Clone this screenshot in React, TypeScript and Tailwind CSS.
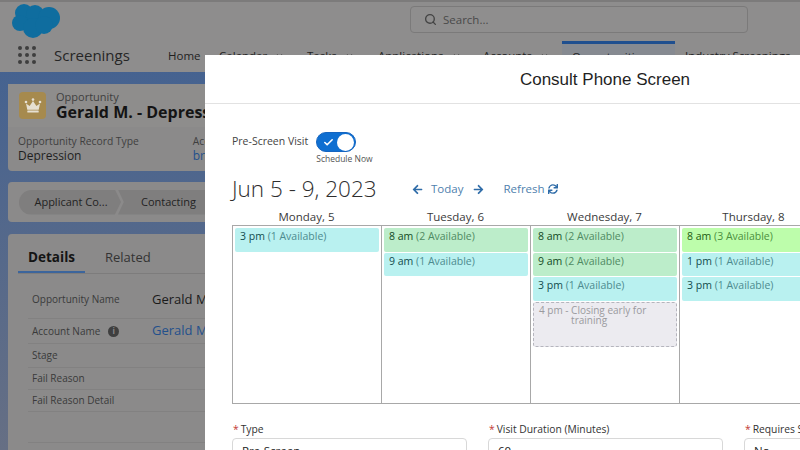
import { Check, ChevronDown, Search } from 'lucide-react';
import { FaArrowLeft, FaArrowRight, FaSync } from 'react-icons/fa';

const navItems = [
  { label: 'Home', width: 'w-[51px]', menu: false, active: false },
  { label: 'Calendar', width: 'w-[88px]', menu: true, active: false },
  { label: 'Tasks', width: 'w-[71px]', menu: true, active: false },
  { label: 'Applications', width: 'w-[105px]', menu: true, active: false },
  { label: 'Accounts', width: 'w-[79px]', menu: true, active: false },
  { label: 'Opportunities', width: 'w-[113px]', menu: true, active: true },
  { label: 'Industry Screenings', width: 'w-[130px] pl-[10px]', menu: false, active: false },
];

const detailRows = [
  { label: 'Opportunity Name', value: 'Gerald M. - Depression', link: false, info: false, height: 'h-[35px] pb-[3px]' },
  { label: 'Account Name', value: 'Gerald M.', link: true, info: true, height: 'h-[25px]' },
  { label: 'Stage', value: '', link: false, info: false, height: 'h-[24px]' },
  { label: 'Fail Reason', value: '', link: false, info: false, height: 'h-[22px]' },
  { label: 'Fail Reason Detail', value: '', link: false, info: false, height: 'h-[22px]' },
  { label: '', value: '', link: false, info: false, height: 'h-[31px]' },
];

type Slot = { time: string; count: number };

const days: { title: string; slots: Slot[]; closed?: boolean }[] = [
  { title: 'Monday, 5', slots: [{ time: '3 pm', count: 1 }] },
  { title: 'Tuesday, 6', slots: [{ time: '8 am', count: 2 }, { time: '9 am', count: 1 }] },
  { title: 'Wednesday, 7', slots: [{ time: '8 am', count: 2 }, { time: '9 am', count: 2 }, { time: '3 pm', count: 1 }], closed: true },
  { title: 'Thursday, 8', slots: [{ time: '8 am', count: 3 }, { time: '1 pm', count: 1 }, { time: '3 pm', count: 1 }] },
];

const slotStyles: Record<number, { box: string; time: string; note: string }> = {
  1: { box: 'bg-[#b9f1f0]', time: 'text-[#124c4e]', note: 'text-[#4d8b8f]' },
  2: { box: 'bg-[#bcedca]', time: 'text-[#124a24]', note: 'text-[#4f8a62]' },
  3: { box: 'bg-[#bdfdab]', time: 'text-[#1d5c12]', note: 'text-[#4b8f3e]' },
};

const fields = [
  { label: 'Type', value: 'Pre-Screen', width: 'w-[235px]' },
  { label: 'Visit Duration (Minutes)', value: '60', width: 'w-[235px]' },
  { label: 'Requires Supervisor', value: 'No', width: 'w-[235px]' },
];

function SalesforceLogo() {
  return (
    <svg viewBox="0 0 50 36" className="h-[36px] w-[50px]" fill="#0f6d9f">
      <circle cx="13" cy="10" r="9" />
      <circle cx="24" cy="11" r="9" />
      <circle cx="38" cy="15" r="11" />
      <circle cx="9" cy="20" r="8" />
      <circle cx="22" cy="25" r="10" />
      <circle cx="33" cy="22" r="9" />
    </svg>
  );
}

function CrownIcon() {
  return (
    <svg viewBox="0 0 20 20" className="h-[20px] w-[20px]" fill="#e6e0d2">
      <path d="M3 7.5l3.6 2.6L10 5l3.4 5.1L17 7.5l-1.3 6.2H4.3z" />
      <circle cx="3" cy="6" r="1.3" />
      <circle cx="10" cy="3.6" r="1.3" />
      <circle cx="17" cy="6" r="1.3" />
      <rect x="4.3" y="14.6" width="11.4" height="2" rx="0.5" />
    </svg>
  );
}

function Background() {
  return (
    <div className="flex h-[450px] w-[800px] flex-col bg-gradient-to-b from-[#3f6092] to-[#666f84]">
      <header className="h-[72px] shrink-0 border-t-2 border-[#7c7b7b] bg-[#8e8d8d]">
        <div className="flex h-[36px] items-start pl-[11px] pr-[52px] pt-[1px]">
          <SalesforceLogo />
          <div className="ml-auto mt-[3px] flex h-[27px] w-[338px] items-center gap-[6px] rounded border border-[#7b7a7a] bg-[#8f8e8e] pl-[13px] text-[11.5px] text-[#4a4a4a]">
            <Search size={13} strokeWidth={2.5} className="text-[#444]" />
            Search...
          </div>
        </div>
        <nav className="flex h-[34px] items-center pl-[18px]">
          <div className="grid h-[18px] w-[18px] shrink-0 grid-cols-3 gap-[3px]">
            {Array.from({ length: 9 }).map((_, i) => (
              <span key={i} className="rounded-full bg-[#3e3e3e]" />
            ))}
          </div>
          <span className="ml-[18px] w-[114px] shrink-0 text-[15px] text-[#262626]">Screenings</span>
          <div className="flex shrink-0 self-end">
            {navItems.map((item) => (
              <div
                key={item.label}
                className={`flex h-[31px] shrink-0 items-center pb-[2px] ${item.width} ${
                  item.active ? 'border-t-[3px] border-[#1f4f8f] bg-[#868a91] pl-[10px]' : ''
                }`}
              >
                <span className="whitespace-nowrap text-[11.5px] text-[#1f1f1f]">{item.label}</span>
                {item.menu && <ChevronDown size={9} className="ml-[8px] text-[#444]" />}
              </div>
            ))}
          </div>
        </nav>
      </header>

      <main className="flex flex-col gap-[11px] px-[8px] pt-[12px]">
        <section className="h-[87px] rounded bg-[#8b8a8a]">
          <div className="flex h-[43px] items-center gap-[10px] bg-[#8e8d8c] px-[11px]">
            <div className="flex h-[27px] w-[27px] items-center justify-center rounded bg-[#a68a4e]">
              <CrownIcon />
            </div>
            <div className="pb-[2px]">
              <div className="text-[11px] leading-[14px] text-[#3f3f3f]">Opportunity</div>
              <div className="whitespace-nowrap text-[16px] font-bold leading-[16px] text-[#141414]">Gerald M. - Depression</div>
            </div>
          </div>
          <div className="flex gap-[54px] px-[10px] pt-[7px]">
            <div>
              <div className="text-[10.3px] leading-[14px] text-[#3f3f3f]">Opportunity Record Type</div>
              <div className="text-[12px] leading-[16px] text-[#1f1f1f]">Depression</div>
            </div>
            <div>
              <div className="text-[10.3px] leading-[14px] text-[#3f3f3f]">Account</div>
              <div className="text-[12px] leading-[16px] text-[#23508c]">brian</div>
            </div>
          </div>
        </section>

        <section className="flex h-[40px] items-center rounded bg-[#8b8a8a] px-[11px]">
          <div className="flex h-[25px] w-[102px] items-center justify-center rounded-l-full bg-[#7f7e7e] pl-[4px] pr-[2px] text-[11px] text-[#232323] [clip-path:polygon(0_0,94%_0,100%_50%,94%_100%,0_100%)]">
            Applicant Co...
          </div>
          <div className="-ml-[3px] flex h-[25px] w-[97px] items-center justify-center bg-[#7f7e7e] pl-[4px] text-[11px] text-[#232323] [clip-path:polygon(0_0,100%_0,100%_100%,0_100%,6%_50%)]">
            Contacting
          </div>
        </section>

        <section className="mt-[1px] h-[230px] rounded bg-[#8b8a8a] pl-[10px] pt-[7px]">
          <div className="flex h-[33px] border-b border-[#7d7c7c] text-[13px]">
            <div className="flex w-[67px] items-center justify-center border-b-[2px] border-[#3c659c] pt-[2px] text-[13.5px] font-bold text-[#141414]">
              Details
            </div>
            <div className="ml-[20px] flex items-center pt-[2px] text-[#333]">Related</div>
          </div>
          <div className="pl-[10px] pt-[10px]">
            {detailRows.map((row, i) => (
              <div key={i} className={`flex items-center border-b border-[#828181] pl-[4px] ${row.height}`}>
                <div className="flex w-[120px] items-center gap-[8px] text-[10px] text-[#3a3a3a]">
                  {row.label}
                  {row.info && (
                    <span className="flex h-[11px] w-[11px] items-center justify-center rounded-full bg-[#3f3f3f] text-[8px] font-bold text-[#8b8a8a]">
                      i
                    </span>
                  )}
                </div>
                <span className={`whitespace-nowrap text-[13px] ${row.link ? 'text-[#23508c]' : 'text-[#1a1a1a]'}`}>
                  {row.value}
                </span>
              </div>
            ))}
          </div>
        </section>
      </main>
    </div>
  );
}

function DayColumn({ title, slots, closed }: (typeof days)[number]) {
  return (
    <div className="w-[149px] shrink-0 border-r border-[#a8a8a8] px-[2px] pt-[2px]">
      <div className="flex flex-col gap-[1px]">
        {slots.map((slot) => {
          const style = slotStyles[slot.count];
          return (
            <div key={title + slot.time} className={`h-[23.5px] rounded-[2px] pl-[5px] text-[10.5px] leading-[16px] ${style.box}`}>
              <span className={style.time}>{slot.time}</span>{' '}
              <span className={style.note}>({slot.count} Available)</span>
            </div>
          );
        })}
        {closed && (
          <div className="flex h-[45px] rounded-[3px] border border-dashed border-[#b5b5bd] bg-[#ecebf0] pl-[5px] pt-[2px] text-[10px] leading-[10.5px] text-[#9a9a9e]">
            <span className="whitespace-pre">4 pm - </span>
            <span className="w-[90px]">Closing early for training</span>
          </div>
        )}
      </div>
    </div>
  );
}

function Modal() {
  return (
    <div className="absolute left-[205px] top-[55px] h-[500px] w-[800px] bg-white">
      <div className="flex h-[49px] items-center justify-center border-b border-[#e2e2e2] pt-[2px] font-['Liberation_Sans',sans-serif] text-[17px] text-[#1f1f1f]">
        Consult Phone Screen
      </div>

      <div className="pl-[27px]">
        <div className="flex pt-[28px]">
          <span className="pt-[1px] text-[10.5px] leading-[16px] text-[#444]">Pre-Screen Visit</span>
          <div className="ml-[8px]">
            <div className="flex h-[20px] w-[40px] items-center justify-between rounded-full border border-[#1565c0] bg-[#0f6fd1] pl-[6px] pr-[1px]">
              <Check size={11} strokeWidth={3.5} className="text-white" />
              <span className="h-[17px] w-[17px] rounded-full bg-white" />
            </div>
            <div className="mt-[1px] whitespace-nowrap text-[8.5px] leading-[12px] text-[#555]">Schedule Now</div>
          </div>
        </div>

        <div className="mt-[9px] flex h-[30px] items-center">
          <span className="w-[180px] whitespace-nowrap text-[22.5px] font-light text-[#2e2e2e]">Jun 5 - 9, 2023</span>
          <FaArrowLeft size={11} className="text-[#2f6ca8]" />
          <span className="ml-[8px] text-[11.5px] text-[#4f7fae]">Today</span>
          <FaArrowRight size={11} className="ml-[10px] text-[#2f6ca8]" />
          <span className="ml-[19px] text-[11.5px] text-[#4f7fae]">Refresh</span>
          <FaSync size={10} className="ml-[3px] text-[#2f6ca8]" />
        </div>

        <div className="mt-[5px] flex h-[15px] w-[800px] text-center text-[11.5px] leading-[15px] text-[#3a3a3a]">
          {days.map((day) => (
            <div key={day.title} className="w-[149px] shrink-0">{day.title}</div>
          ))}
        </div>

        <div className="mt-[1px] flex h-[179px] w-[800px] border-y border-l border-[#a8a8a8]">
          {days.map((day) => (
            <DayColumn key={day.title} {...day} />
          ))}
        </div>

        <div className="mt-[18px] flex gap-[21px]">
          {fields.map((field) => (
            <div key={field.label} className={`shrink-0 ${field.width}`}>
              <div className="h-[15px] text-[10.3px] leading-[15px] text-[#333]">
                <span className="ml-[1px] mr-[2px] text-[#c23934]">*</span>
                {field.label}
              </div>
              <div className="mt-[1px] h-[32px] rounded border border-[#d8d8d8] pl-[9px] pt-[3px] text-[11.5px] text-[#222]">
                {field.value}
              </div>
            </div>
          ))}
        </div>
      </div>
    </div>
  );
}

export default function App() {
  return (
    <div className="relative h-[450px] w-[800px] overflow-hidden font-['Open_Sans',sans-serif]">
      <Background />
      <Modal />
    </div>
  );
}
